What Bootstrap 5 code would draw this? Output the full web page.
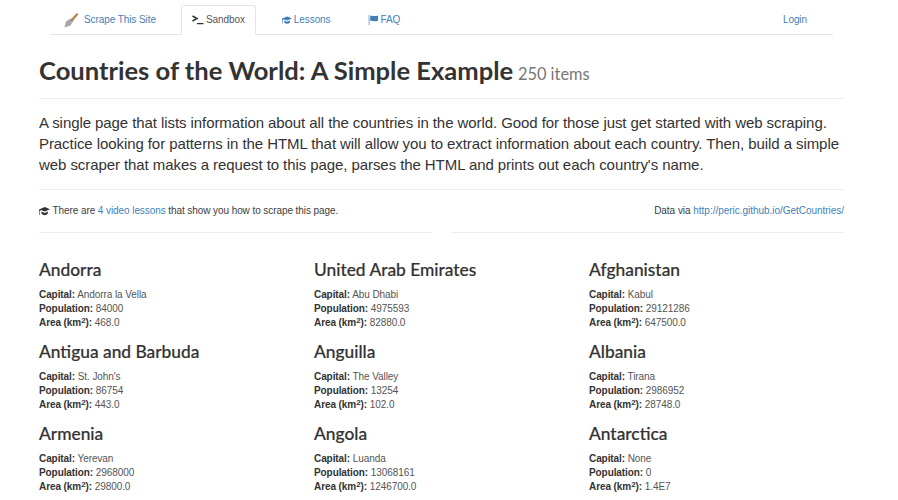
<!DOCTYPE html>
<html lang="en">
<head>
<meta charset="utf-8">
<title>Countries of the World</title>
<link rel="stylesheet" href="https://cdn.jsdelivr.net/npm/bootstrap@5.3.0/dist/css/bootstrap.min.css">
<style>
html{overflow:hidden}
body{font-family:"Liberation Sans",Arial,sans-serif;font-size:10px;letter-spacing:-.08px;line-height:14px;color:#3d3d3d;background:#fff;height:500px;overflow:hidden}
a{color:#3f7fb8;text-decoration:none}
.site-wrap{padding:0 54px 0 39px}
.tabs-bar{margin:0 11px;height:35px;border-bottom:1px solid #e4e4e4;padding:5px 0 0 3px;font-size:10px}
.tabs-bar .nav-link{color:#3f7fb8;height:30px;padding:0 10px;display:flex;align-items:center;gap:2px;border:1px solid transparent;border-radius:3px 3px 0 0;margin:0 15px 0 0}
.tabs-bar .nav-link.active{color:#555;background:#fff;border-color:#e4e4e4 #e4e4e4 #fff}
.tabs-bar .tab-brand{gap:6px;margin-right:14px}
.tab-flag{margin-right:1px}
.page-title{font-family:Lato,sans-serif;font-weight:700;font-size:25.55px;letter-spacing:0;line-height:32px;color:#333;margin:19px 0 0;padding-bottom:8px;border-bottom:1px solid #eee}
.page-title small{font-weight:400;font-size:16.4px;color:#777;margin-left:-1.500px}
.intro{font-size:15px;letter-spacing:-.075px;line-height:21px;color:#333;margin:13px 0 0;padding-bottom:14px}
.rule{border-top:1px solid #eee;margin:0}
.info-left,.info-right{padding:14px 0 15px}
.info-row{display:grid;grid-template-columns:393px 393px;column-gap:19px}
.info-row>div{border-bottom:1px solid #eee;height:43px}
.info-right{text-align:right;letter-spacing:-.03px}
.country-grid{display:grid;grid-template-columns:repeat(3,275px);margin-top:26px}
.country-name{font-family:Lato,sans-serif;font-weight:500;font-size:17.35px;letter-spacing:0;line-height:22px;color:#333;margin:0 0 7px;-webkit-text-stroke:.2px #333}
.country-info{line-height:14px;height:42px;margin-bottom:11px;color:#555}
.country-info strong{font-weight:700;color:#333}
.country-info sup{font-size:8px;line-height:0;top:-.4em}
svg{flex:none}
</style>
</head>
<body>
<div class="site-wrap">
  <nav class="tabs-bar nav">
    <a class="nav-link tab-brand" href="#"><svg width="14" height="15" viewBox="0 0 14 15"><path d="M0.500 14.500 2 8.500 5.500 6 8.500 9 6.500 12.500z" fill="#a9a9a9"/><path d="M6 6.500 8.500 9 9.500 7.500 7.500 5.500z" fill="#7d7d7d"/><path d="M8.500 6.500 12.800 1.500" stroke="#b5834a" stroke-width="2.400" stroke-linecap="round"/></svg> Scrape This Site</a>
    <a class="nav-link active" href="#"><svg width="12" height="10" viewBox="0 0 12 10"><path d="M.5 1 5 3.500.5 6" fill="none" stroke="#333" stroke-width="1.500"/><path d="M5 8.600h6.500" stroke="#333" stroke-width="1.300"/></svg> Sandbox</a>
    <a class="nav-link" href="#"><svg width="10" height="9" viewBox="0 0 11 9"><path d="M5.800 0 11 2.300 5.800 4.600 1.800 3 .8 4.500V7L0 8.500.3 4.500 0 2.400zM2.500 4.500 5.800 5.900 8.800 4.500V6.800C7 8.600 4.400 8.600 2.500 6.800z" fill="#3f7fb8"/></svg> Lessons</a>
    <a class="nav-link" href="#"><svg class="tab-flag" width="10" height="10" viewBox="0 0 10 10"><path d="M.5 0h1.100v10H.5z" fill="#8fb3d5"/><path d="M2.200 1C4 0 6.300 2 10 .6v5.200C6.500 7.200 4 5.300 2.200 6z" fill="#3f7fb8"/></svg> FAQ</a>
    <a class="nav-link ms-auto" href="#">Login</a>
  </nav>
  <h1 class="page-title">Countries of the World: A Simple Example <small>250 items</small></h1>
  <p class="intro">A single page that lists information about all the countries in the world. Good for those just get started with web scraping. Practice looking for patterns in the HTML that will allow you to extract information about each country. Then, build a simple web scraper that makes a request to this page, parses the HTML and prints out each country's name.</p>
  <hr class="rule opacity-100">
  <div class="info-row">
    <div class="info-left"><svg width="11" height="9" viewBox="0 0 11 9"><path d="M5.800 0 11 2.300 5.800 4.600 1.800 3 .8 4.500V7L0 8.500.3 4.500 0 2.400zM2.500 4.500 5.800 5.900 8.800 4.500V6.800C7 8.600 4.400 8.600 2.500 6.800z" fill="#333"/></svg> There are <a href="#">4 video lessons</a> that show you how to scrape this page.</div>
    <div class="info-right">Data via <a href="#">http://peric.github.io/GetCountries/</a></div>
  </div>
  <div class="country-grid">
    <div><h3 class="country-name">Andorra</h3><div class="country-info"><strong>Capital:</strong> Andorra la Vella<br><strong>Population:</strong> 84000<br><strong>Area (km<sup>2</sup>):</strong> 468.0</div></div>
    <div><h3 class="country-name">United Arab Emirates</h3><div class="country-info"><strong>Capital:</strong> Abu Dhabi<br><strong>Population:</strong> 4975593<br><strong>Area (km<sup>2</sup>):</strong> 82880.0</div></div>
    <div><h3 class="country-name">Afghanistan</h3><div class="country-info"><strong>Capital:</strong> Kabul<br><strong>Population:</strong> 29121286<br><strong>Area (km<sup>2</sup>):</strong> 647500.0</div></div>
    <div><h3 class="country-name">Antigua and Barbuda</h3><div class="country-info"><strong>Capital:</strong> St. John's<br><strong>Population:</strong> 86754<br><strong>Area (km<sup>2</sup>):</strong> 443.0</div></div>
    <div><h3 class="country-name">Anguilla</h3><div class="country-info"><strong>Capital:</strong> The Valley<br><strong>Population:</strong> 13254<br><strong>Area (km<sup>2</sup>):</strong> 102.0</div></div>
    <div><h3 class="country-name">Albania</h3><div class="country-info"><strong>Capital:</strong> Tirana<br><strong>Population:</strong> 2986952<br><strong>Area (km<sup>2</sup>):</strong> 28748.0</div></div>
    <div><h3 class="country-name">Armenia</h3><div class="country-info"><strong>Capital:</strong> Yerevan<br><strong>Population:</strong> 2968000<br><strong>Area (km<sup>2</sup>):</strong> 29800.0</div></div>
    <div><h3 class="country-name">Angola</h3><div class="country-info"><strong>Capital:</strong> Luanda<br><strong>Population:</strong> 13068161<br><strong>Area (km<sup>2</sup>):</strong> 1246700.0</div></div>
    <div><h3 class="country-name">Antarctica</h3><div class="country-info"><strong>Capital:</strong> None<br><strong>Population:</strong> 0<br><strong>Area (km<sup>2</sup>):</strong> 1.4E7</div></div>
  </div>
</div>
<script src="https://cdn.jsdelivr.net/npm/bootstrap@5.3.0/dist/js/bootstrap.bundle.min.js"></script>
</body>
</html>
